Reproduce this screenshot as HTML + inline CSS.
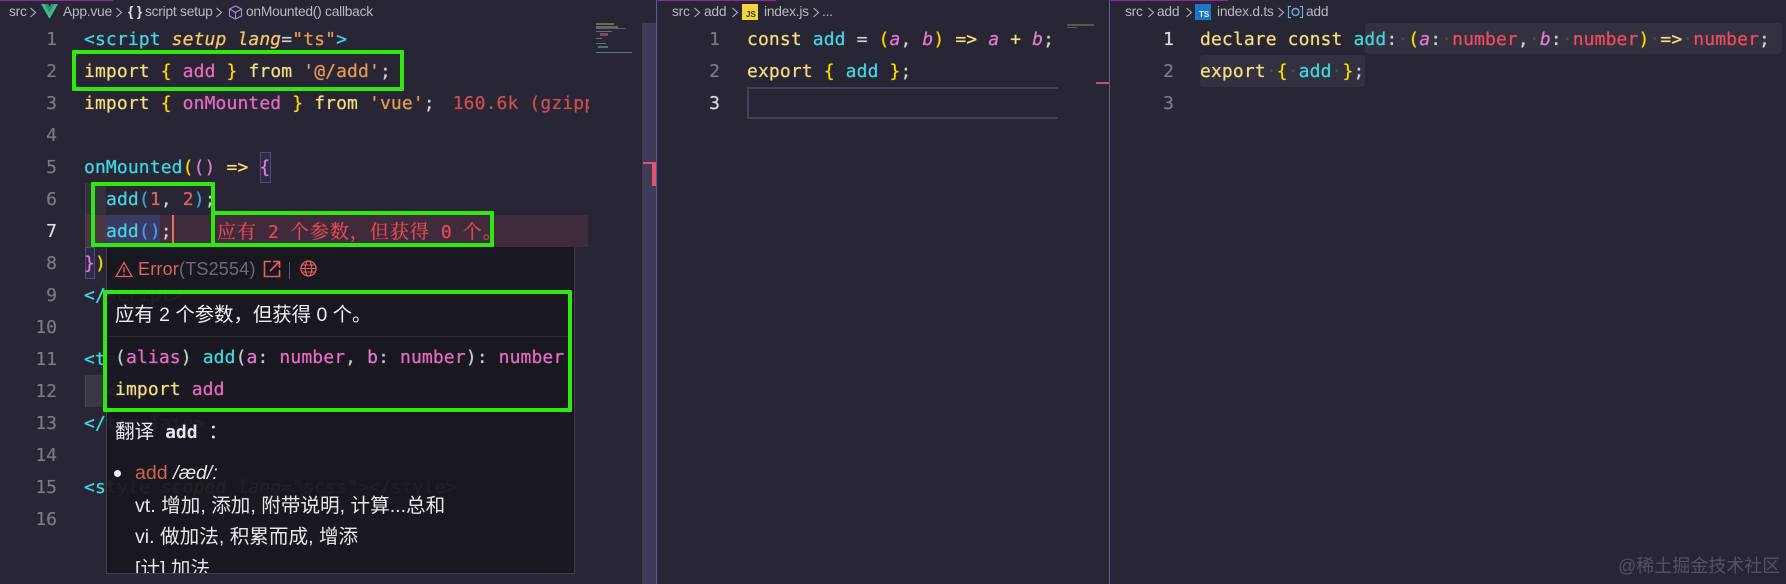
<!DOCTYPE html>
<html><head><meta charset="utf-8">
<style>
html,body{margin:0;padding:0;width:1786px;height:584px;overflow:hidden;background:#282534}
*{box-sizing:border-box}
.a{position:absolute}
.t{position:absolute;white-space:pre;height:32px;margin-top:1px;font:18px/32px "DejaVu Sans Mono","Noto Sans CJK SC",monospace;letter-spacing:.12px;color:#d4d4d4;text-shadow:0 0 .7px currentColor}
.n{position:absolute;height:32px;margin-top:1px;font:18px/32px "DejaVu Sans Mono",monospace;color:#7a7885;text-align:right;width:40px;text-shadow:0 0 .6px currentColor}
.b{position:absolute;white-space:pre;top:3px;height:18px;font:13.8px/18px "Liberation Sans","Noto Sans CJK SC",sans-serif;color:#b9b8c2;letter-spacing:-.25px}
.g{position:absolute;border:4px solid #2de90d;border-radius:1px}
.y{color:#f6dc82}.o{color:#ffd700}.p{color:#e46cc0}.c{color:#42d6e0}.s{color:#e39a56}.i{font-style:italic}
.r{color:#ee4c5c}.w{color:#cfcfd6}.bl{color:#3f9ee8}.m{color:#df7bd2}.d{color:#4b4957}.rr{color:#e0605f}
.h{position:absolute;white-space:pre;font-family:"Liberation Sans","Noto Sans CJK SC",sans-serif;font-size:19.6px;line-height:32px;height:32px;color:#e8e8ea}
.z{font-size:19px;letter-spacing:1px}
</style></head>
<body>
<!-- panes -->
<div class="a" style="left:656px;top:0;width:1px;height:584px;background:#605aa0"></div>
<div class="a" style="left:1109px;top:0;width:1px;height:584px;background:#605aa0"></div>
<div class="a" style="left:642px;top:23px;width:14px;height:561px;background:#3f3a58"></div>
<div class="a" style="left:0;top:0;width:113px;height:1px;background:#8a2d92"></div>
<div class="a" style="left:658px;top:0;width:118px;height:1px;background:#8a2d92"></div>
<div class="a" style="left:1111px;top:0;width:117px;height:1px;background:#8a2d92"></div>
<!-- scroll marks -->
<div class="a" style="left:643px;top:162px;width:13px;height:2px;background:#e0566c"></div>
<div class="a" style="left:652px;top:162px;width:4px;height:24px;background:#e0566c"></div>
<div class="a" style="left:1096px;top:82px;width:13px;height:2px;background:#b85a62"></div>
<!-- minimap 1 -->
<div class="a" style="left:596px;top:23px;width:18px;height:2px;background:#6a685e"></div>
<div class="a" style="left:596px;top:26px;width:22px;height:2px;background:#6d665e"></div>
<div class="a" style="left:596px;top:28px;width:30px;height:1px;background:#645c6c"></div>
<div class="a" style="left:596px;top:31px;width:16px;height:1px;background:#477a84"></div>
<div class="a" style="left:600px;top:33px;width:8px;height:3px;background:#8a4456"></div>
<div class="a" style="left:596px;top:38px;width:6px;height:1px;background:#477a84"></div>
<div class="a" style="left:596px;top:43px;width:10px;height:1px;background:#477a84"></div>
<div class="a" style="left:598px;top:46px;width:10px;height:2px;background:#50707a"></div>
<div class="a" style="left:596px;top:52px;width:36px;height:1px;background:#567c84"></div>
<!-- minimap 2 -->
<div class="a" style="left:1067px;top:24px;width:27px;height:2px;background:#55584f"></div>
<div class="a" style="left:1067px;top:27px;width:10px;height:1px;background:#5c5848"></div>

<!-- breadcrumbs pane 1 -->
<div class="b" style="left:9px">src</div>
<svg class="a" style="left:29px;top:7px" width="8" height="11"><path d="M1.500 1L6.500 5.500L1.500 10" fill="none" stroke="#b0afba" stroke-width="1.100"/></svg>
<svg class="a" style="left:41px;top:4px" width="17" height="15" viewBox="0 0 17 15"><path d="M0 0H4L8.500 8L13 0H17L8.500 15Z" fill="#41b883"/><path d="M4 0H7L8.500 2.800L10 0H13L8.500 8Z" fill="#2f8f7a"/></svg>
<div class="b" style="left:63px">App.vue</div>
<svg class="a" style="left:115px;top:7px" width="8" height="11"><path d="M1.500 1L6.500 5.500L1.500 10" fill="none" stroke="#b0afba" stroke-width="1.100"/></svg>
<div class="b" style="left:128px;color:#dcdce0;font-weight:bold">{ }</div>
<div class="b" style="left:145px">script setup</div>
<svg class="a" style="left:215px;top:7px" width="8" height="11"><path d="M1.500 1L6.500 5.500L1.500 10" fill="none" stroke="#b0afba" stroke-width="1.100"/></svg>
<svg class="a" style="left:228px;top:5px" width="15" height="15" viewBox="0 0 15 15"><path d="M7.500 1L13.500 4V11L7.500 14L1.500 11V4ZM1.500 4L7.500 7.500L13.500 4M7.500 7.500V14" fill="none" stroke="#a98be0" stroke-width="1.100"/></svg>
<div class="b" style="left:246px">onMounted() callback</div>

<!-- pane 2 breadcrumbs -->
<div class="b" style="left:672px">src</div>
<svg class="a" style="left:693px;top:7px" width="8" height="11"><path d="M1.500 1L6.500 5.500L1.500 10" fill="none" stroke="#b0afba" stroke-width="1.100"/></svg>
<div class="b" style="left:704px">add</div>
<svg class="a" style="left:731px;top:7px" width="8" height="11"><path d="M1.500 1L6.500 5.500L1.500 10" fill="none" stroke="#b0afba" stroke-width="1.100"/></svg>
<div class="a" style="left:742px;top:4px;width:16px;height:16px;background:#f4d43c"></div>
<div class="a" style="left:746px;top:10px;font:bold 8px/10px 'Liberation Sans',sans-serif;color:#33302a">JS</div>
<div class="b" style="left:764px">index.js</div>
<svg class="a" style="left:812px;top:7px" width="8" height="11"><path d="M1.500 1L6.500 5.500L1.500 10" fill="none" stroke="#b0afba" stroke-width="1.100"/></svg>
<div class="b" style="left:822px">...</div>

<!-- pane 3 breadcrumbs -->
<div class="b" style="left:1125px">src</div>
<svg class="a" style="left:1147px;top:7px" width="8" height="11"><path d="M1.500 1L6.500 5.500L1.500 10" fill="none" stroke="#b0afba" stroke-width="1.100"/></svg>
<div class="b" style="left:1157px">add</div>
<svg class="a" style="left:1185px;top:7px" width="8" height="11"><path d="M1.500 1L6.500 5.500L1.500 10" fill="none" stroke="#b0afba" stroke-width="1.100"/></svg>
<div class="a" style="left:1195px;top:4px;width:16px;height:16px;background:#1a78c6"></div>
<div class="a" style="left:1199px;top:10px;font:bold 8px/10px 'Liberation Sans',sans-serif;color:#e6f0f8">TS</div>
<div class="b" style="left:1217px">index.d.ts</div>
<svg class="a" style="left:1277px;top:7px" width="8" height="11"><path d="M1.500 1L6.500 5.500L1.500 10" fill="none" stroke="#b0afba" stroke-width="1.100"/></svg>
<svg class="a" style="left:1287px;top:5px" width="17" height="14" viewBox="0 0 17 14"><path d="M4 1.500H1.500V12.500H4M13 1.500H15.500V12.500H13" fill="none" stroke="#6fa8dc" stroke-width="1.200"/><circle cx="8.500" cy="7" r="3.500" fill="none" stroke="#6fa8dc" stroke-width="1.400"/></svg>
<div class="b" style="left:1306px">add</div>

<!-- pane 1 decorations -->
<div class="a" style="left:85px;top:215px;width:503px;height:32px;background:#3f2b3b"></div>
<div class="a" style="left:85px;top:183px;width:21px;height:32px;background:#33313e"></div>
<div class="a" style="left:85px;top:215px;width:21px;height:32px;background:#4a3743"></div>
<div class="a" style="left:106px;top:215px;width:54px;height:32px;background:#3c3a62"></div>
<div class="a" style="left:85px;top:183px;width:1px;height:64px;background:#45434f"></div>
<div class="a" style="left:260px;top:152px;width:11px;height:31px;background:#2e2b44;border:1px solid #4f4a86"></div>
<div class="a" style="left:85px;top:247px;width:10px;height:32px;background:#2e2b44;border:1px solid #4f4a86"></div>
<div class="a" style="left:172px;top:215px;width:2px;height:28px;background:#e8735e"></div>
<div class="a" style="left:85px;top:375px;width:220px;height:32px;background:#3a3844;border-left:1px solid #4a4854"></div>

<!-- line numbers pane 1 -->
<div class="n" style="left:17px;top:23px">1</div>
<div class="n" style="left:17px;top:55px">2</div>
<div class="n" style="left:17px;top:87px">3</div>
<div class="n" style="left:17px;top:119px">4</div>
<div class="n" style="left:17px;top:151px">5</div>
<div class="n" style="left:17px;top:183px">6</div>
<div class="n" style="left:17px;top:215px;color:#dcdce0">7</div>
<div class="n" style="left:17px;top:247px">8</div>
<div class="n" style="left:17px;top:279px">9</div>
<div class="n" style="left:17px;top:311px">10</div>
<div class="n" style="left:17px;top:343px">11</div>
<div class="n" style="left:17px;top:375px">12</div>
<div class="n" style="left:17px;top:407px">13</div>
<div class="n" style="left:17px;top:439px">14</div>
<div class="n" style="left:17px;top:471px">15</div>
<div class="n" style="left:17px;top:503px">16</div>

<!-- code pane 1 -->
<div class="t" style="left:84px;top:23px"><span class="c">&lt;script</span> <span class="i" style="color:#f3c86a">setup</span> <span class="i" style="color:#f3c86a">lang</span><span class="w">=</span><span class="s">"ts"</span><span class="c">&gt;</span></div>
<div class="t" style="left:84px;top:55px"><span class="y">import</span> <span class="o">{</span> <span class="p">add</span> <span class="o">}</span> <span class="y">from</span> <span class="s">'@/add'</span><span class="w">;</span></div>
<div class="t" style="left:84px;top:87px;width:505px;overflow:hidden"><span class="y">import</span> <span class="o">{</span> <span class="p">onMounted</span> <span class="o">}</span> <span class="y">from</span> <span class="s">'vue'</span><span class="w">;</span> <span style="color:#c9504f;margin-left:7px">160.6k (gzipped: 60k)</span></div>
<div class="t" style="left:84px;top:151px"><span class="c">onMounted</span><span class="o">(</span><span class="m">()</span> <span class="y">=&gt;</span> <span class="m">{</span></div>
<div class="t" style="left:106px;top:183px"><span class="c">add</span><span class="bl">(</span><span class="rr">1</span><span class="w">,</span> <span class="rr">2</span><span class="bl">)</span><span class="w">;</span></div>
<div class="t" style="left:106px;top:215px"><span class="c">add</span><span class="bl">()</span><span class="w">;</span></div>
<div class="t" style="left:217px;top:215px;color:#e04a55;font-family:'DejaVu Sans Mono','Noto Serif CJK SC',monospace"><span class="z">应有</span> 2 <span class="z">个参数，但获得</span> 0 <span class="z">个。</span></div>
<div class="t" style="left:84px;top:247px"><span class="m">}</span><span class="o">)</span></div>
<div class="t" style="left:84px;top:279px"><span class="c">&lt;/script&gt;</span></div>
<div class="t" style="left:84px;top:343px"><span class="c">&lt;template&gt;</span></div>
<div class="t" style="left:106px;top:375px"><span class="c">&lt;div&gt;</span></div>
<div class="t" style="left:84px;top:407px"><span class="c">&lt;/template&gt;</span></div>
<div class="t" style="left:84px;top:471px"><span class="c">&lt;style</span> <span class="i" style="color:#f3c86a">scoped</span> <span class="i" style="color:#f3c86a">lang</span><span class="w">=</span><span class="s">"scss"</span><span class="c">&gt;&lt;/style&gt;</span></div>

<!-- tooltip -->
<div class="a" style="left:106px;top:247px;width:469px;height:327px;background:rgba(24,23,32,.95);border:1px solid #3f3e4b;border-top:none;overflow:hidden"></div>
<svg class="a" style="left:115px;top:261px" width="18" height="17" viewBox="0 0 18 17"><path d="M9 1.500L17 15.500H1ZM9 6V11.500M9 13V14.500" fill="none" stroke="#e0605a" stroke-width="1.300"/></svg>
<div class="h" style="left:138px;top:253px;font-size:18px;color:#e0605a;letter-spacing:.2px">Error<span style="color:#6b6a75">(TS2554)</span></div>
<svg class="a" style="left:263px;top:260px" width="18" height="18" viewBox="0 0 18 18"><path d="M8 1.500H1.500V16.500H16.500V10M10 1.500H16.500V8M16.500 1.500L7 11" fill="none" stroke="#e0605a" stroke-width="1.600"/></svg>
<div class="a" style="left:289px;top:262px;width:1px;height:17px;background:#5b5a65"></div>
<svg class="a" style="left:300px;top:260px" width="17" height="17" viewBox="0 0 17 17"><circle cx="8.500" cy="8.500" r="7.500" fill="none" stroke="#e0605a" stroke-width="1.300"/><ellipse cx="8.500" cy="8.500" rx="3.300" ry="7.500" fill="none" stroke="#e0605a" stroke-width="1.200"/><path d="M1 8.500H16M2 5H15M2 12H15" stroke="#e0605a" stroke-width="1.100"/></svg>
<div class="h" style="left:115px;top:299px;font-size:19.4px;color:#f0f0f2">应有 2 个参数，但获得 0 个。</div>
<div class="a" style="left:107px;top:336px;width:463px;height:1px;background:#2e2d38"></div>
<div class="t" style="left:115px;top:341px;color:#c8c8d0">(<span class="p">alias</span>) <span class="c">add</span>(<span class="m">a</span>: <span class="p">number</span>, <span class="m">b</span>: <span class="p">number</span>): <span class="p">number</span></div>
<div class="t" style="left:115px;top:373px"><span class="y">import</span> <span class="p">add</span></div>
<div class="h" style="left:115px;top:416px">翻译  <span style="font:bold 18px 'DejaVu Sans Mono',monospace">add</span>  ：</div>
<div class="a" style="left:114px;top:470px;width:7px;height:7px;border-radius:50%;background:#f0f0f2"></div>
<div class="h" style="left:135px;top:457px"><span style="color:#d0624e">add</span> <i>/æd/:</i></div>
<div class="h" style="left:135px;top:490px">vt. 增加, 添加, 附带说明, 计算...总和</div>
<div class="h" style="left:135px;top:521px">vi. 做加法, 积累而成, 增添</div>
<div class="a" style="left:135px;top:553px;width:200px;height:20px;overflow:hidden"><div class="h" style="left:0;top:0">[计] 加法</div></div>

<!-- green boxes -->
<div class="g" style="left:72px;top:50px;width:332px;height:41px"></div>
<div class="g" style="left:91px;top:182px;width:124px;height:65px"></div>
<div class="g" style="left:211px;top:211px;width:283px;height:36px"></div>
<div class="g" style="left:103px;top:290px;width:469px;height:122px"></div>

<!-- pane 2 -->
<div class="n" style="left:680px;top:23px">1</div>
<div class="n" style="left:680px;top:55px">2</div>
<div class="n" style="left:680px;top:87px;color:#dcdce0">3</div>
<div class="a" style="left:747px;top:87px;width:311px;height:32px;border:2px solid #433e5f;border-right:none"></div>
<div class="t" style="left:747px;top:23px"><span class="y">const</span> <span class="c">add</span> <span class="w">=</span> <span class="o">(</span><span class="m i">a</span><span class="w">,</span> <span class="m i">b</span><span class="o">)</span> <span class="y">=&gt;</span> <span class="m i">a</span> <span class="y">+</span> <span class="m i">b</span><span class="w">;</span></div>
<div class="t" style="left:747px;top:55px"><span class="y">export</span> <span class="o">{</span> <span class="c">add</span> <span class="o">}</span><span class="w">;</span></div>

<!-- pane 3 -->
<div class="a" style="left:1365px;top:23px;width:417px;height:31px;background:#33313f;border-radius:4px"></div>
<div class="a" style="left:1200px;top:55px;width:165px;height:32px;background:#33313f;border-radius:4px"></div>
<div class="n" style="left:1134px;top:23px;color:#dcdce0">1</div>
<div class="n" style="left:1134px;top:55px">2</div>
<div class="n" style="left:1134px;top:87px">3</div>
<div class="t" style="left:1200px;top:23px"><span class="y">declare</span> <span class="y">const</span> <span class="c">add</span><span class="w">:</span><span class="d">·</span><span class="o">(</span><span class="m i">a</span><span class="w">:</span><span class="d">·</span><span class="r">number</span><span class="w">,</span><span class="d">·</span><span class="m i">b</span><span class="w">:</span><span class="d">·</span><span class="r">number</span><span class="o">)</span><span class="d">·</span><span class="y">=&gt;</span><span class="d">·</span><span class="r">number</span><span class="w">;</span></div>
<div class="t" style="left:1200px;top:55px"><span class="y">export</span><span class="d">·</span><span class="o">{</span><span class="d">·</span><span class="c">add</span><span class="d">·</span><span class="o">}</span><span class="w">;</span></div>

<!-- watermark -->
<div class="a" style="left:1618px;top:556px;white-space:pre;font:18px/20px 'Liberation Sans','Noto Sans CJK SC',sans-serif;color:#545260">@稀土掘金技术社区</div>
</body></html>
